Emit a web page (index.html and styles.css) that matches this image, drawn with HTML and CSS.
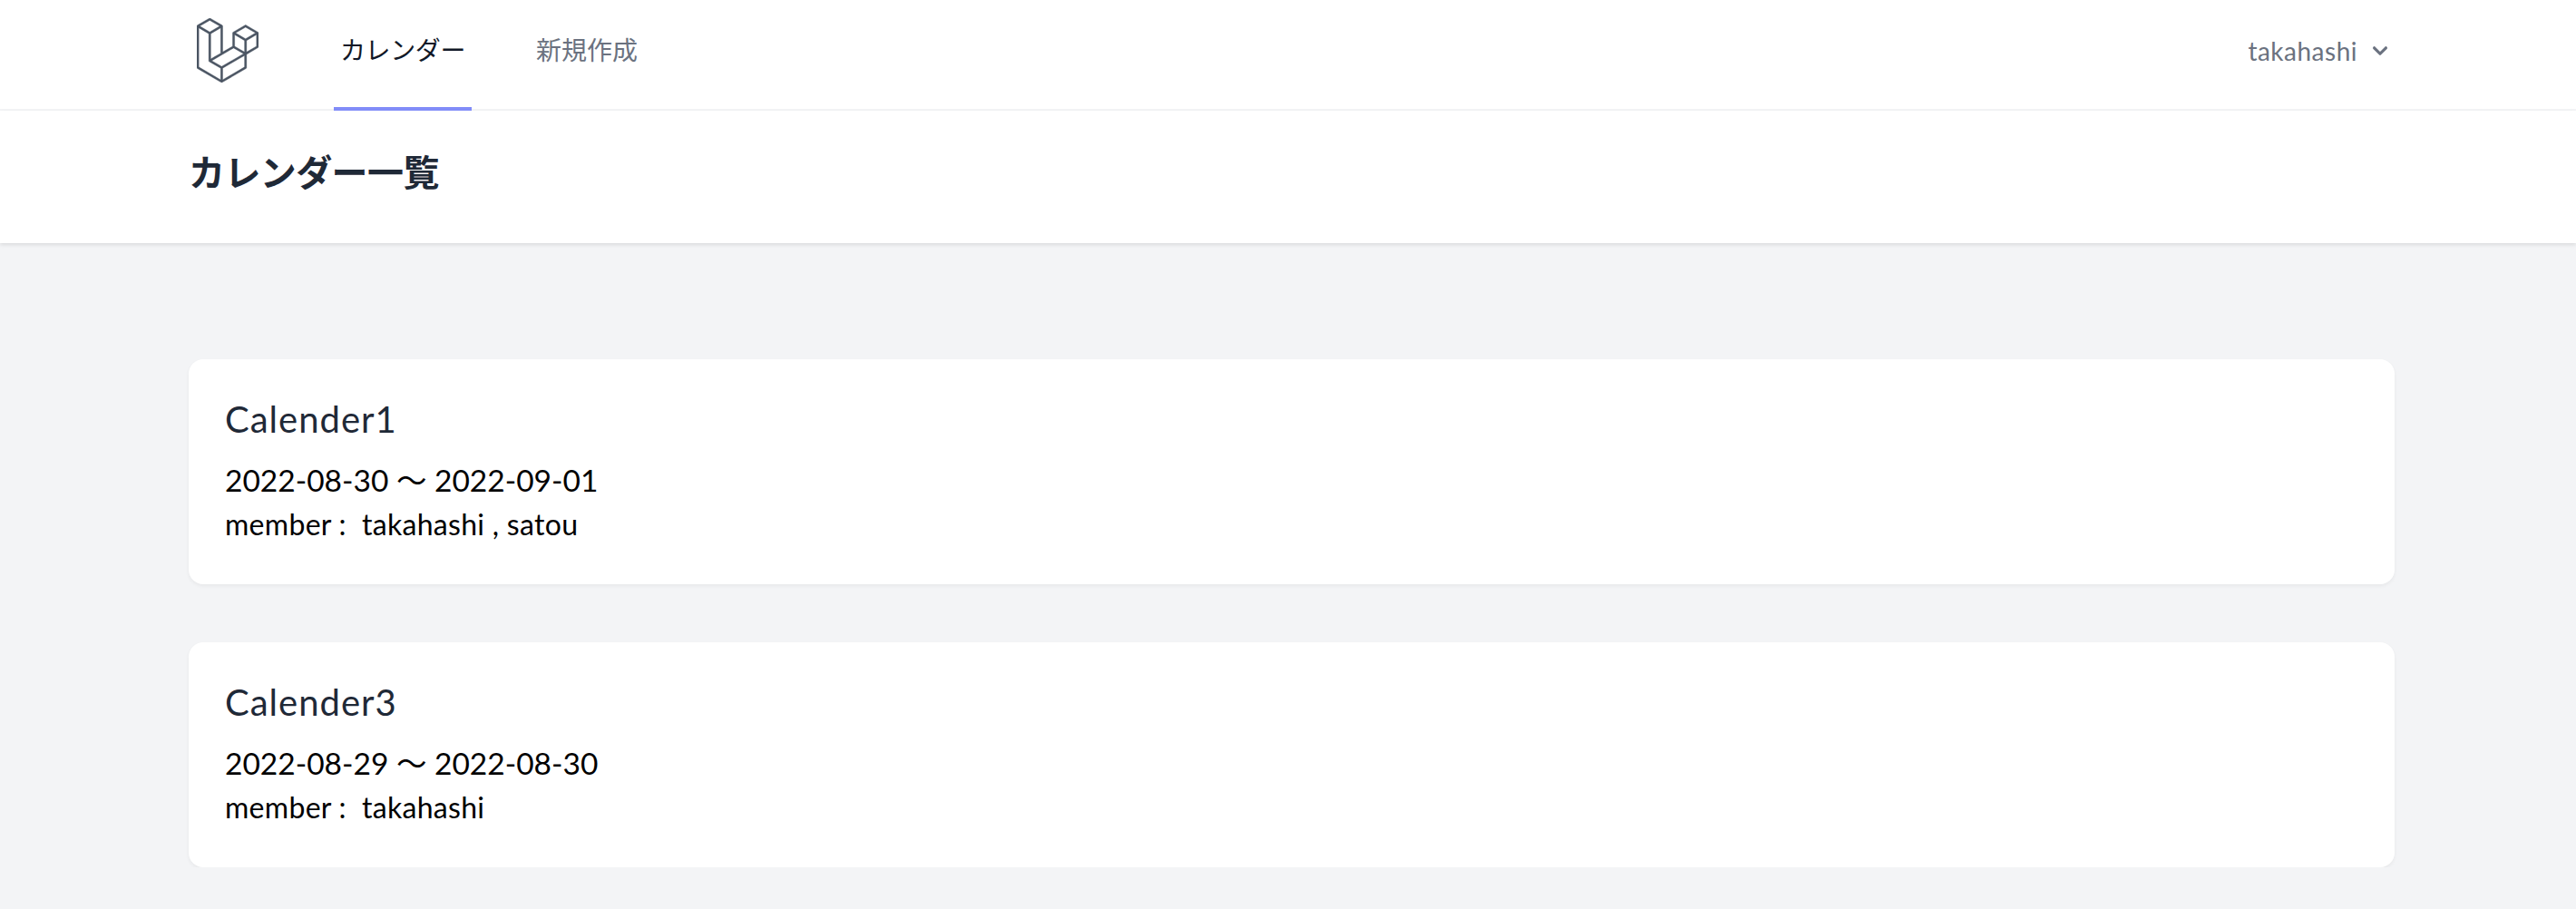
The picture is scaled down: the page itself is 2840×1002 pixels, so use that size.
FILE: index.html
```html
<!DOCTYPE html>
<html lang="ja">
<head>
    <meta charset="UTF-8">
    <meta name="viewport" content="width=device-width, initial-scale=1.0">
    <title>カレンダー一覧</title>
    <link rel="stylesheet" href="styles.css">
</head>
<body>
    <nav class="top-nav">
        <div class="container nav-inner">
            <div class="nav-left">
                <svg class="logo" viewBox="35 18 271 279" preserveAspectRatio="none">
                    <path fill="currentColor" d="M305.8 81.125C305.77 80.995 305.69 80.885 305.65 80.755C305.56 80.525 305.49 80.285 305.37 80.075C305.29 79.935 305.17 79.815 305.07 79.685C304.94 79.515 304.83 79.325 304.68 79.175C304.55 79.045 304.39 78.955 304.25 78.845C304.09 78.715 303.95 78.575 303.77 78.475L251.32 48.275C249.97 47.495 248.31 47.495 246.96 48.275L194.51 78.475C194.33 78.575 194.19 78.725 194.03 78.845C193.89 78.955 193.73 79.045 193.6 79.175C193.45 79.325 193.34 79.515 193.21 79.685C193.11 79.815 192.99 79.935 192.91 80.075C192.79 80.285 192.71 80.525 192.63 80.755C192.58 80.875 192.51 80.995 192.48 81.125C192.38 81.495 192.33 81.875 192.33 82.265V139.625L148.62 164.795V52.575C148.62 52.185 148.57 51.805 148.47 51.435C148.44 51.305 148.36 51.195 148.32 51.065C148.23 50.835 148.16 50.595 148.04 50.385C147.96 50.245 147.84 50.125 147.74 49.995C147.61 49.825 147.5 49.635 147.35 49.485C147.22 49.355 147.06 49.265 146.92 49.155C146.76 49.025 146.62 48.885 146.44 48.785L93.99 18.585C92.64 17.805 90.98 17.805 89.63 18.585L37.18 48.785C37 48.885 36.86 49.035 36.7 49.155C36.56 49.265 36.4 49.355 36.27 49.485C36.12 49.635 36.01 49.825 35.88 49.995C35.78 50.125 35.66 50.245 35.58 50.385C35.46 50.595 35.38 50.835 35.3 51.065C35.25 51.185 35.18 51.305 35.15 51.435C35.05 51.805 35 52.185 35 52.575V232.235C35 233.795 35.84 235.245 37.19 236.025L142.1 296.425C142.33 296.555 142.58 296.635 142.82 296.725C142.93 296.765 143.04 296.835 143.16 296.865C143.53 296.965 143.9 297.015 144.28 297.015C144.66 297.015 145.03 296.965 145.4 296.865C145.5 296.835 145.59 296.775 145.69 296.745C145.95 296.655 146.21 296.565 146.45 296.435L251.36 236.035C252.72 235.255 253.55 233.815 253.55 232.245V174.885L303.81 145.945C305.17 145.165 306 143.725 306 142.155V82.265C305.95 81.875 305.89 81.495 305.8 81.125ZM144.2 227.205L100.57 202.515L146.39 176.135L196.66 147.195L240.33 172.335L208.29 190.625L144.2 227.205ZM244.75 114.995V164.795L226.39 154.225L201.03 139.625V89.825L219.39 100.395L244.75 114.995ZM249.12 57.105L292.81 82.265L249.12 107.425L205.43 82.265L249.12 57.105ZM114.49 184.425L96.13 194.995V85.305L121.49 70.705L139.85 60.135V169.815L114.49 184.425ZM91.76 27.425L135.45 52.585L91.76 77.745L48.07 52.585L91.76 27.425ZM43.67 60.135L62.03 70.705L87.39 85.305V202.545V202.555V202.565C87.39 202.735 87.44 202.895 87.46 203.055C87.49 203.265 87.49 203.485 87.55 203.695V203.705C87.6 203.875 87.69 204.035 87.76 204.195C87.84 204.375 87.89 204.575 87.99 204.745C87.99 204.745 87.99 204.755 88 204.755C88.09 204.905 88.22 205.035 88.33 205.175C88.45 205.335 88.55 205.495 88.69 205.635L88.7 205.645C88.82 205.765 88.98 205.855 89.12 205.965C89.28 206.085 89.42 206.225 89.59 206.325C89.6 206.325 89.6 206.325 89.61 206.335C89.62 206.335 89.62 206.345 89.63 206.345L139.87 234.775V285.065L43.67 229.705V60.135ZM244.75 229.705L148.58 285.075V234.775L219.8 194.115L244.75 179.875V229.705ZM297.2 139.625L253.49 164.795V114.995L278.85 100.395L297.21 89.825V139.625H297.2Z"/>
                </svg>
                <div class="nav-links">
                    <a class="nav-link active" href="#">カレンダー</a>
                    <a class="nav-link" href="#">新規作成</a>
                </div>
            </div>
            <div class="user-menu">
                <span>takahashi</span>
                <svg class="chevron" viewBox="0 0 20 20">
                    <path fill="currentColor" fill-rule="evenodd" clip-rule="evenodd" d="M5.293 7.293a1 1 0 011.414 0L10 10.586l3.293-3.293a1 1 0 111.414 1.414l-4 4a1 1 0 01-1.414 0l-4-4a1 1 0 010-1.414z"/>
                </svg>
            </div>
        </div>
    </nav>

    <header class="page-header">
        <div class="container">
            <h2 class="page-title">カレンダー一覧</h2>
        </div>
    </header>

    <main class="container calendar-list">
        <div class="calendar-card">
            <div class="calendar-name">Calender1</div>
            <div class="calendar-dates">2022-08-30 〜 2022-09-01</div>
            <div class="calendar-members">member :&nbsp; takahashi , satou</div>
        </div>
        <div class="calendar-card">
            <div class="calendar-name">Calender3</div>
            <div class="calendar-dates">2022-08-29 〜 2022-08-30</div>
            <div class="calendar-members">member :&nbsp; takahashi</div>
        </div>
    </main>
</body>
</html>
```

FILE: styles.css
```css
body {
    margin: 0;
    background-color: #f3f4f6;
    font-family: Lato, "Noto Sans CJK JP", sans-serif;
    color: #000;
}
.container {
    width: 2432px;
    margin-left: 208px;
}
.top-nav {
    height: 120px;
    background-color: #fff;
    border-bottom: 2px solid #f3f4f6;
}
.nav-inner {
    height: 100%;
    display: flex;
    justify-content: space-between;
    align-items: center;
}
.nav-left {
    height: 100%;
    display: flex;
    align-items: center;
}
.logo {
    width: 68px;
    height: 71px;
    margin-left: 9px;
    margin-right: 83px;
    margin-bottom: 10px;
    color: #4b5563;
    stroke: currentColor;
    stroke-width: 1.5;
}
.nav-links {
    height: 100%;
    display: flex;
    gap: 65px;
}
.nav-link {
    height: 122px;
    box-sizing: border-box;
    padding: 0 6px 10px;
    display: flex;
    align-items: center;
    border-bottom: 4px solid transparent;
    font-size: 28px;
    color: #6b7280;
    text-decoration: none;
}
.nav-link.active {
    padding: 0 7px 10px;
    letter-spacing: -0.4px;
    color: #111827;
    border-bottom-color: #818cf8;
}
.user-menu {
    display: flex;
    align-items: center;
    gap: 9px;
    padding-bottom: 8px;
    font-size: 28px;
    letter-spacing: 0.5px;
    color: #6b7280;
}
.chevron {
    width: 32px;
    height: 32px;
}
.page-header {
    background-color: #fff;
    box-shadow: 0 2px 4px rgba(0, 0, 0, 0.1);
}
.page-title {
    margin: 0;
    padding: 40px 0 50px;
    font-size: 40px;
    line-height: 56px;
    font-weight: 700;
    letter-spacing: -0.6px;
    color: #1f2937;
}
.calendar-list {
    padding-top: 128px;
    display: flex;
    flex-direction: column;
    gap: 64px;
}
.calendar-card {
    height: 248px;
    box-sizing: border-box;
    padding: 38px 40px 0;
    background-color: #fff;
    border-radius: 16px;
    box-shadow: 0 2px 4px rgba(0, 0, 0, 0.05);
}
.calendar-name {
    font-size: 40px;
    line-height: 56px;
    letter-spacing: 1px;
    color: #1f2937;
}
.calendar-dates {
    margin-top: 15px;
    font-size: 33.5px;
    line-height: 48px;
}
.calendar-members {
    margin-top: 1px;
    font-size: 32px;
    line-height: 48px;
    letter-spacing: 0.3px;
}
```
